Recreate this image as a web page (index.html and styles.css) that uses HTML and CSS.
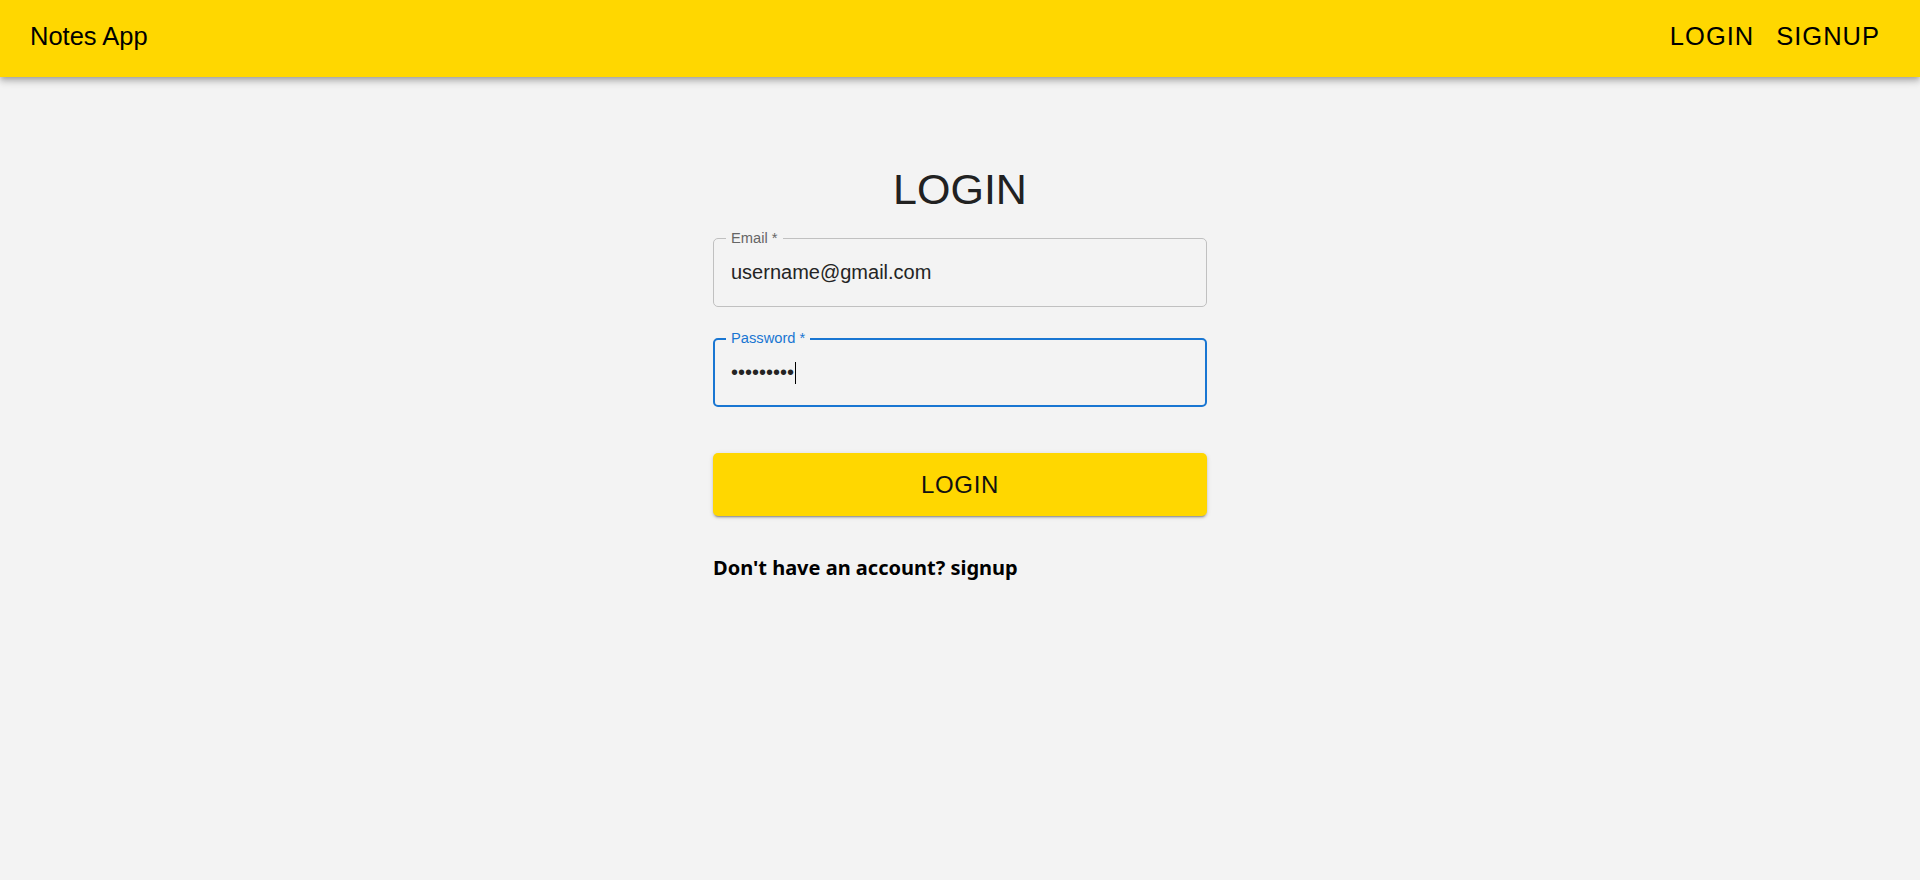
FILE: index.html
```html
<!DOCTYPE html>
<html lang="en">
<head>
<meta charset="utf-8">
<title>Notes App</title>
<link rel="stylesheet" href="styles.css">
</head>
<body>
<header class="appbar">
  <div class="brand">Notes App</div>
  <nav class="nav">
    <a class="nav-link" href="#">LOGIN</a>
    <a class="nav-link" href="#">SIGNUP</a>
  </nav>
</header>
<main class="main">
  <form class="login-form" onsubmit="return false">
    <h1 class="title">LOGIN</h1>
    <div class="field">
      <label class="field-label" for="email">Email *</label>
      <input class="field-input" id="email" type="text" value="username@gmail.com">
    </div>
    <div class="field field-focused">
      <label class="field-label" for="password">Password *</label>
      <input class="field-input" id="password" type="password" value="123456789">
      <span class="caret"></span>
    </div>
    <button class="submit" type="submit">LOGIN</button>
    <p class="signup-text">Don't have an account? signup</p>
  </form>
</main>
</body>
</html>
```
FILE: styles.css
```css
* { box-sizing: border-box; }

html, body {
  margin: 0;
  padding: 0;
  background: #f3f3f3;
  font-family: "Liberation Sans", Arial, sans-serif;
}

.appbar {
  height: 77px;
  background: #ffd700;
  display: flex;
  align-items: center;
  justify-content: space-between;
  padding: 0 40px 4px 30px;
  box-shadow: 0 2px 5px -1px rgba(0,0,0,0.2), 0 5px 6px 0 rgba(0,0,0,0.14), 0 1px 12px 0 rgba(0,0,0,0.12);
}

.brand {
  font-size: 25.5px;
  color: #000;
}

.nav {
  display: flex;
  gap: 22px;
}

.nav-link {
  font-size: 25.5px;
  letter-spacing: 1px;
  color: #000;
  text-decoration: none;
}

.main {
  padding-top: 86px;
}

.login-form {
  width: 494px;
  margin: 0 auto;
  display: flex;
  flex-direction: column;
}

.title {
  margin: 0 0 23px;
  font-size: 43px;
  line-height: 52px;
  font-weight: 400;
  text-align: center;
  color: #212121;
}

.field {
  position: relative;
  height: 69px;
  border: 1px solid #c0c0c0;
  border-radius: 5px;
  display: flex;
  align-items: center;
  padding: 0 16px 0 17px;
}

.field + .field {
  margin-top: 31px;
}

.field-label {
  position: absolute;
  top: -8px;
  left: 12px;
  padding: 0 5px;
  background: #f3f3f3;
  font-size: 14.7px;
  line-height: 1;
  color: #666;
}

.field-focused {
  border: 2px solid #1976d2;
  padding: 0 15px 0 16px;
}

.field-focused .field-label {
  top: -9px;
  left: 11px;
  color: #1976d2;
}

.field-input {
  width: 100%;
  border: 0;
  outline: 0;
  padding: 0;
  margin: 0;
  background: transparent;
  font-family: "Liberation Sans", Arial, sans-serif;
  font-size: 20px;
  color: #242424;
}

.caret {
  position: absolute;
  left: 80px;
  top: 22px;
  width: 1px;
  height: 22px;
  background: #000;
}

.submit {
  margin-top: 46px;
  height: 63px;
  border: 0;
  border-radius: 5px;
  background: #ffd700;
  font-family: "Liberation Sans", Arial, sans-serif;
  font-size: 24px;
  letter-spacing: 0.7px;
  color: #111;
  cursor: pointer;
  box-shadow: 0 3px 1px -2px rgba(0,0,0,0.2), 0 2px 2px 0 rgba(0,0,0,0.14), 0 1px 5px 0 rgba(0,0,0,0.12);
}

.signup-text {
  margin: 38px 0 0;
  font-family: "Noto Sans", sans-serif;
  font-weight: 700;
  font-size: 20px;
  color: #000;
}
```
